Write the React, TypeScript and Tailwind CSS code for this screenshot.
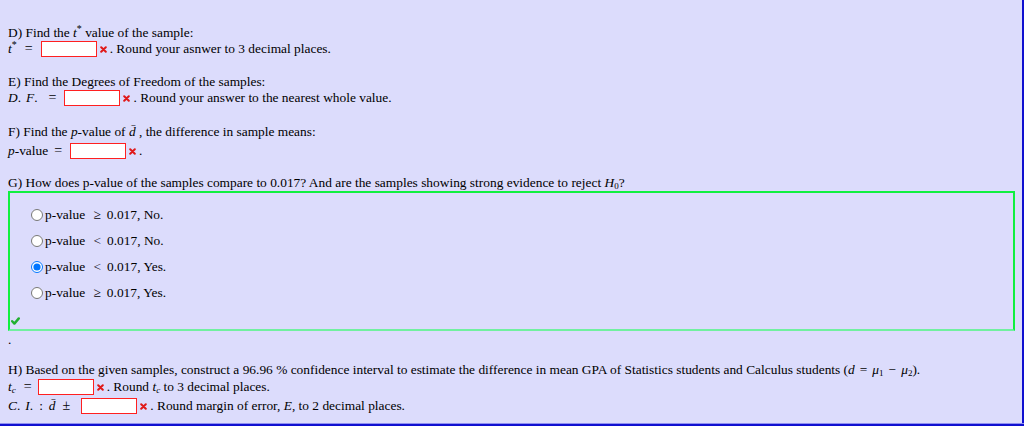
import React from "react";

const XMark = () => (
  <svg width="7" height="7" viewBox="0 0 7 7" className="inline-block ml-[3px] mr-[3px] align-[0px]">
    <path d="M1.2 1.2 L5.8 5.8 M5.8 1.2 L1.2 5.8" stroke="#e01818" strokeWidth="2" strokeLinecap="round" />
  </svg>
);

const Box = () => (
  <span className="inline-block h-[16px] w-[56px] border border-[#ff2020] bg-white align-[-4px]" />
);

const M = ({ children }: { children: React.ReactNode }) => (
  <span className="italic">{children}</span>
);

const Radio = ({ checked, label }: { checked?: boolean; label: React.ReactNode }) => (
  <div className="flex items-center h-[26px]">
    <input type="radio" readOnly checked={!!checked} className="m-0 mr-[2px] w-[12px] h-[12px]" />
    <span>{label}</span>
  </div>
);

export default function App() {
  return (
    <div className="w-[1024px] h-[426px] bg-[#dcdcfc] flex flex-col overflow-hidden font-['Liberation_Serif'] text-[13.4px] leading-[16px] text-black">
      <div className="flex-1 border-r-2 border-[#1010d0] pl-[8px] pt-[25px]">
        <div>
          D) Find the <M>t</M><sup className="text-[10px]">*</sup> value of the sample:
        </div>
        <div className="h-[17px]">
          <M>t</M>
          <sup className="text-[10px]">*</sup>
          <span className="ml-[8px] mr-[8px] text-[14px]">=</span>
          <Box />
          <XMark />. Round your asnwer to 3 decimal places.
        </div>
        <div className="mt-[16px]">E) Find the Degrees of Freedom of the samples:</div>
        <div className="h-[17px]">
          <M>D</M>.<M><span className="ml-[5px]">F</span></M>.<span className="ml-[11px] mr-[8px] text-[14px]">=</span>
          <Box />
          <XMark />. Round your answer to the nearest whole value.
        </div>
        <div className="mt-[17px]">
          F) Find the <M>p</M>-value of <M>d̄</M> , the difference in sample means:
        </div>
        <div className="h-[20px] pt-[3px]">
          <M>p</M>-value<span className="ml-[6px] mr-[8px] text-[14px]">=</span>
          <Box />
          <XMark />.
        </div>
        <div className="mt-[15px]">
          G) How does p-value of the samples compare to 0.017? And are the samples showing strong evidence to reject <M>H</M>
          <sub className="text-[9px]">0</sub>?
        </div>
        <div className="mt-0 w-[1007px] h-[140px] border-2 border-[#10f040] border-b-[#70f0a0] relative">
          <div className="pl-[21px] pt-[9px]">
            <Radio label={<>p-value <span className="ml-[5px] mr-[6px]">≥</span>0.017, No.</>} />
            <Radio label={<>p-value <span className="ml-[5px] mr-[6px]">&lt;</span>0.017, No.</>} />
            <Radio checked label={<>p-value <span className="ml-[5px] mr-[6px]">&lt;</span>0.017, Yes.</>} />
            <Radio label={<>p-value <span className="ml-[5px] mr-[6px]">≥</span>0.017, Yes.</>} />
          </div>
          <svg width="9" height="8" viewBox="0 0 9 8" className="absolute left-[1px] top-[124px]">
            <path d="M1.2 4.2 L3.4 6.6 L7.8 1.4" stroke="#22b030" strokeWidth="2.4" fill="none" strokeLinecap="round" strokeLinejoin="round" />
          </svg>
        </div>
        <div className="mt-[1px]">.</div>
        <div className="mt-[14px]">
          H) Based on the given samples, construct a 96.96 % confidence interval to estimate the difference in mean GPA of Statistics students and Calculus students (<M>d</M>
          <span className="mx-[5px]">=</span>
          <M>μ</M>
          <sub className="text-[9px]">1</sub>
          <span className="mx-[5px]">−</span>
          <M>μ</M>
          <sub className="text-[9px]">2</sub>).
        </div>
        <div className="h-[19px] pt-[1px]">
          <M>t</M>
          <sub className="text-[9px] italic">c</sub>
          <span className="ml-[8px] mr-[6px] text-[14px]">=</span>
          <Box />
          <XMark />. Round <M>t</M>
          <sub className="text-[9px] italic">c</sub> to 3 decimal places.
        </div>
        <div className="h-[20px] pt-[1px]">
          <M>C</M>.<M><span className="ml-[5px]">I</span></M>.<span className="ml-[6px] mr-[6px]">:</span><M>d̄</M>
          <span className="ml-[7px] mr-[11px] text-[14px]">±</span>
          <Box />
          <XMark />. Round margin of error, <M>E</M>, to 2 decimal places.
        </div>
      </div>
      <div className="h-[1px] bg-[#9090f0]" />
      <div className="h-[2px] bg-[#1010d0]" />
    </div>
  );
}
